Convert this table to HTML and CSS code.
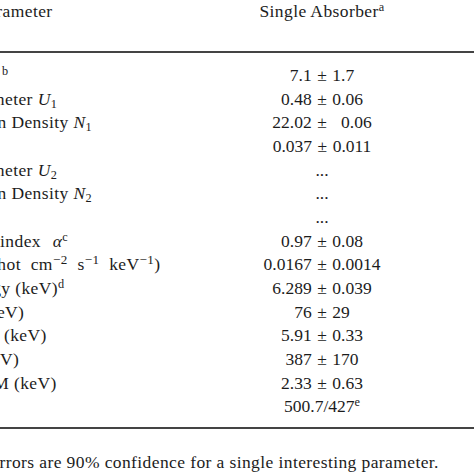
FILE: index.html
```html
<!DOCTYPE html>
<html lang="en">
<head>
<meta charset="utf-8">
<title>Fit parameters</title>
<link rel="stylesheet" href="styles.css">
</head>
<body>
<div class="sheet">
  <table class="fit">
    <colgroup>
      <col class="c-param">
      <col class="c-single">
      <col class="c-rest">
    </colgroup>
    <thead>
      <tr>
        <th class="lbl">Fitted Parameter</th>
        <th class="val">Single Absorber<sup class="mk">a</sup></th>
        <th></th>
      </tr>
    </thead>
    <tbody>
      <tr><td class="lbl">Fixed <i>N</i><sub>H</sub><sup class="mk after">b</sup></td><td class="val">7.1<span class="pm">±</span>1.7</td><td></td></tr>
      <tr><td class="lbl">Ion parameter <i>U</i><sub>1</sub></td><td class="val">0.48<span class="pm">±</span>0.06</td><td></td></tr>
      <tr><td class="lbl">H Column Density <i>N</i><sub>1</sub></td><td class="val">22.02<span class="pm">±</span><span class="ph">0</span>0.06</td><td></td></tr>
      <tr><td class="lbl"><i>f</i><sub>1</sub></td><td class="val">0.037<span class="pm">±</span>0.011</td><td></td></tr>
      <tr><td class="lbl">Ion parameter <i>U</i><sub>2</sub></td><td class="val">...</td><td></td></tr>
      <tr><td class="lbl">H Column Density <i>N</i><sub>2</sub></td><td class="val">...</td><td></td></tr>
      <tr><td class="lbl"><i>f</i><sub>2</sub></td><td class="val">...</td><td></td></tr>
      <tr><td class="lbl">Spectral&nbsp; index <i class="wide">α</i><sup class="mk">c</sup></td><td class="val">0.97<span class="pm">±</span>0.08</td><td></td></tr>
      <tr><td class="lbl">Norm. <span class="unit">(phot cm<sup>−2</sup> s<sup>−1</sup> keV<sup>−1</sup>)</span></td><td class="val">0.0167<span class="pm">±</span>0.0014</td><td></td></tr>
      <tr><td class="lbl">Fe&nbsp; Energy (keV)<sup class="mk">d</sup></td><td class="val">6.289<span class="pm">±</span>0.039</td><td></td></tr>
      <tr><td class="lbl">Sigma (keV)</td><td class="val">76<span class="pm">±</span>29</td><td></td></tr>
      <tr><td class="lbl">Centroid&nbsp; (keV)</td><td class="val">5.91<span class="pm">±</span>0.33</td><td></td></tr>
      <tr><td class="lbl">Fe EW (eV)</td><td class="val">387<span class="pm">±</span>170</td><td></td></tr>
      <tr><td class="lbl">Fe FWHM (keV)</td><td class="val">2.33<span class="pm">±</span>0.63</td><td></td></tr>
      <tr><td class="lbl"><i>χ</i><sup>2</sup>/dof</td><td class="val">500.7/427<sup class="mk">e</sup></td><td></td></tr>
    </tbody>
  </table>
  <p class="note"><sup class="mk">a</sup>Errors are 90% confidence for a single interesting parameter.</p>
</div>
</body>
</html>
```

FILE: styles.css
```css
html,
body {
  margin: 0;
  overflow: hidden;
  background: #ffffff;
}

body {
  color: #1c1c1c;
  font-family: "Liberation Serif", "Times New Roman", serif;
  font-size: 17.5px;
  line-height: 23.67px;
}

.sheet {
  margin-left: -70px;
  width: calc(100% + 70px);
}

.fit {
  width: 100%;
  table-layout: fixed;
  border-collapse: separate;
  border-spacing: 0;
}

.c-param {
  width: 315px;
}

.c-single {
  width: 154px;
}

.fit th,
.fit td {
  padding: 0;
  font-weight: normal;
  white-space: nowrap;
  vertical-align: baseline;
}

.fit thead th {
  line-height: 22px;
  padding-bottom: 29px;
  letter-spacing: 0.4px;
  border-bottom: 2px solid #444444;
}

.fit tbody tr:first-child td {
  padding-top: 11px;
}

.fit tbody tr:last-child td {
  padding-bottom: 8px;
  border-bottom: 2px solid #444444;
}

.lbl {
  text-align: left;
  letter-spacing: 0.4px;
}

.val {
  text-align: center;
}

.pm {
  margin: 0 5.5px;
}

.ph {
  visibility: hidden;
}

sup,
sub {
  font-size: 0.7em;
  line-height: 0;
}

sup {
  vertical-align: 6px;
}

sub {
  vertical-align: -3px;
}

.unit sup {
  font-size: 0.75em;
}

.unit {
  word-spacing: 5px;
}

.after {
  margin-left: 4px;
}

.wide {
  margin-left: 7px;
}

.note {
  margin: 22.3px 0 0;
  text-indent: 3em;
  letter-spacing: 0.4px;
  white-space: nowrap;
}
```
